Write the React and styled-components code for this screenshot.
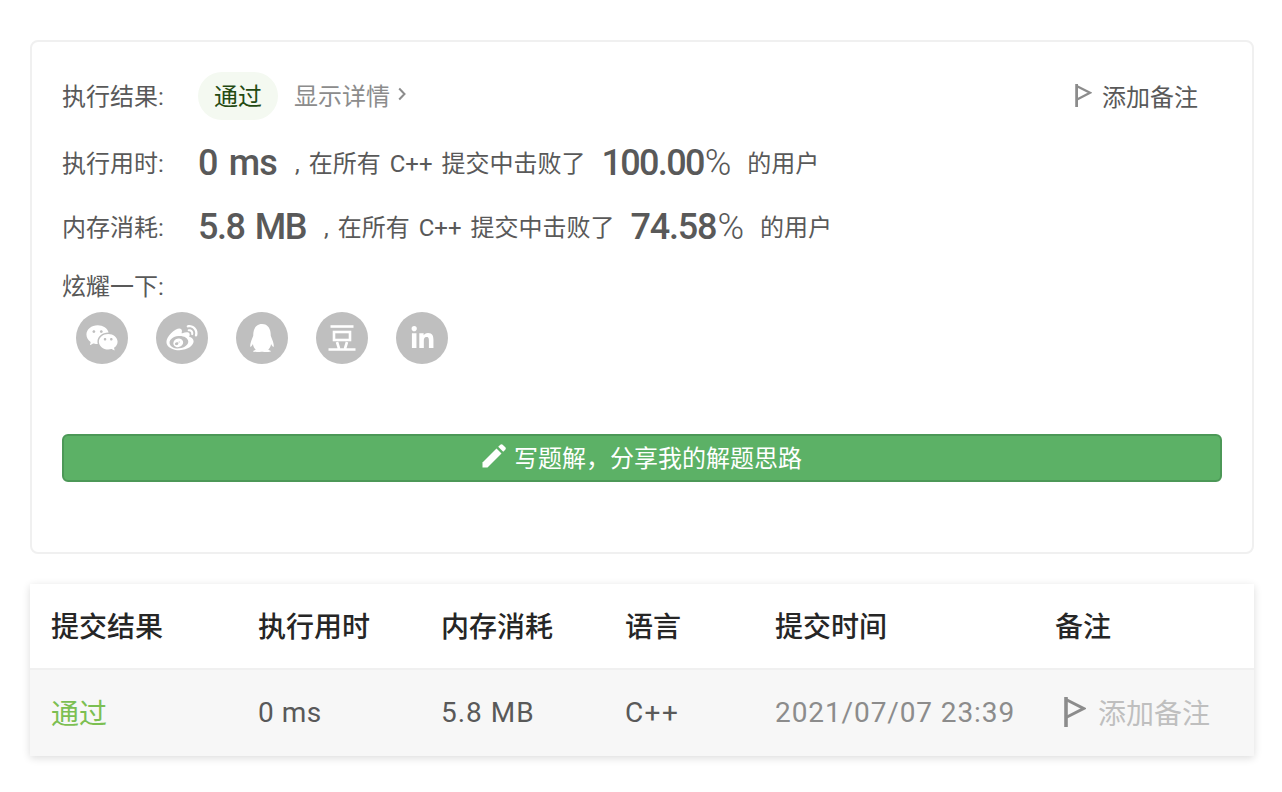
import React from "react";
import styled, { createGlobalStyle } from "styled-components";
import { RiWechatFill, RiWeiboFill } from "react-icons/ri";
import { FaLinkedinIn, FaQq } from "react-icons/fa";

const cjk = `Roboto, "Noto Sans CJK SC", sans-serif`;

const GlobalStyle = createGlobalStyle`
  html, body {
    margin: 0;
    padding: 0;
    background: #fff;
    font-family: ${cjk};
  }
`;

const Page = styled.div`
  width: 1282px;
  height: 792px;
  box-sizing: border-box;
  padding: 40px 28px 0 30px;
  overflow: hidden;
`;

const ResultCard = styled.section`
  box-sizing: border-box;
  height: 514px;
  border: 2px solid #f0f0f0;
  border-radius: 8px;
  padding: 30px 30px 0;
  display: flex;
  flex-direction: column;
`;

const Row = styled.div`
  display: flex;
  align-items: center;
  height: ${(p) => p.$h}px;
  margin-bottom: ${(p) => p.$mb || 0}px;
  color: #595959;
  font-size: 24px;
`;

// the CJK fallback sits a little low in the Roboto line box, so body text gets lifted
const Text = styled.span`
  padding-bottom: 4px;
`;

const Label = styled(Text)`
  width: 136px;
  flex: none;
  font-size: 24px;
  color: #595959;
`;

const Pill = styled.span`
  width: 80px;
  height: 48px;
  box-sizing: border-box;
  padding-bottom: 4px;
  border-radius: 24px;
  background: #f4f9f1;
  color: #244a12;
  font-size: 24px;
  display: flex;
  align-items: center;
  justify-content: center;
`;

const Details = styled.span`
  margin-left: 16px;
  color: #8c8c8c;
  display: flex;
  align-items: center;
  gap: 8px;
  padding-bottom: 4px;
`;

const NoteButton = styled.span`
  margin-left: auto;
  margin-right: 24px;
  display: flex;
  align-items: center;
  gap: 10px;
  color: #595959;
  padding-bottom: 2px;
`;

const Big = styled.span`
  font-size: 36px;
  font-weight: 500;
  color: #595959;
  letter-spacing: ${(p) => p.$ls}px;
  word-spacing: 3px;
`;

const Stat = styled.span`
  font-size: 36px;
  font-weight: 500;
  color: #595959;
  margin: 0 16px;
  letter-spacing: ${(p) => p.$ls}px;
`;

const Percent = styled.span`
  font-weight: 300;
  letter-spacing: 0;
  margin-left: 1px;
`;

const Comma = styled(Text)`
  margin-left: 18px;
  word-spacing: 3px;
`;

const ShareList = styled.div`
  display: flex;
  gap: 28px;
  padding-left: 14px;
  margin-top: 2px;
  margin-bottom: 70px;
`;

const ShareIcon = styled.span`
  width: 52px;
  height: 52px;
  border-radius: 50%;
  background: #bfbfbf;
  color: #fff;
  display: flex;
  align-items: center;
  justify-content: center;
`;

const WriteButton = styled.button`
  box-sizing: border-box;
  width: 1160px;
  height: 48px;
  background: #5cb166;
  border: 2px solid #4c9857;
  border-radius: 6px;
  color: #fff;
  font-family: ${cjk};
  font-size: 24px;
  display: flex;
  align-items: center;
  justify-content: center;
  gap: 8px;
  padding: 0 0 4px;
`;

const Table = styled.section`
  margin-top: 30px;
  height: 172px;
  box-shadow: 0 2px 8px rgba(0, 0, 0, 0.14);
  background: #fff;
`;

const TableRow = styled.div`
  display: grid;
  grid-template-columns: 207px 183px 184px 150px 280px 1fr;
  align-items: center;
  padding: 0 0 2px 21px;
  box-sizing: border-box;
  height: ${(p) => p.$h}px;
  background: ${(p) => p.$bg || "#fff"};
  border-bottom: ${(p) => (p.$line ? "2px solid #f0f0f0" : "none")};
  font-size: 28px;
`;

const HeadCell = styled.div`
  color: #262626;
  font-weight: 500;
`;

const Cell = styled.div`
  color: ${(p) => p.$color || "#595959"};
  white-space: nowrap;
  letter-spacing: ${(p) => p.$ls || 0}px;
`;

const NoteCell = styled.div`
  display: flex;
  align-items: center;
  gap: 12px;
  color: #bfbfbf;
  padding-left: 9px;
`;

const Flag = ({ w, h, color }) => (
  <svg width={w} height={h} viewBox="0 0 22 30" style={{ display: "block" }}>
    <path d="M2 0v30" stroke={color} strokeWidth="3.6" fill="none" />
    <path d="M2 2.5l17.5 9L2 20.5" stroke={color} strokeWidth="3" fill="none" />
  </svg>
);

const Chevron = () => (
  <svg width="8" height="14" viewBox="0 0 8 14">
    <path d="M1.2 1.5L6.5 7l-5.3 5.5" stroke="#8c8c8c" strokeWidth="2" fill="none" />
  </svg>
);

const Pencil = () => (
  <svg width="24" height="24" viewBox="0 0 24 24" fill="#fff">
    <path d="M0.5 18.5V23.5H5.5L19.5 9.5L14.5 4.5Z" />
    <path d="M16.2 2.8L18.3 0.7C19 0 20 0 20.7 0.7L23.3 3.3C24 4 24 5 23.3 5.7L21.2 7.8Z" />
  </svg>
);

const DoubanIcon = () => (
  <svg width="28" height="28" viewBox="0 0 28 28" fill="none" stroke="#fff" strokeWidth="2.6">
    <path d="M2.5 2.5h23" />
    <rect x="6" y="8" width="16" height="8" />
    <path d="M9 18l2 6.5M19 18l-2 6.5M0.5 25.5h27" />
  </svg>
);

const App = () => (
  <Page>
    <GlobalStyle />
    <ResultCard>
      <Row $h={48} $mb={19}>
        <Label>执行结果:</Label>
        <Pill>通过</Pill>
        <Details>
          显示详情
          <Chevron />
        </Details>
        <NoteButton>
          <Flag w={17} h={23} color="#8c8c8c" />
          添加备注
        </NoteButton>
      </Row>
      <Row $h={48} $mb={16}>
        <Label>执行用时:</Label>
        <Big $ls={-0.8}>0 ms</Big>
        <Comma>, 在所有 C++ 提交中击败了</Comma>
        <Stat $ls={-1.7}>100.00<Percent>%</Percent></Stat>
        <Text>的用户</Text>
      </Row>
      <Row $h={48} $mb={11}>
        <Label>内存消耗:</Label>
        <Big $ls={-1.5}>5.8 MB</Big>
        <Comma>, 在所有 C++ 提交中击败了</Comma>
        <Stat $ls={-1.2}>74.58<Percent>%</Percent></Stat>
        <Text>的用户</Text>
      </Row>
      <Row $h={48} $mb={0}>
        <Label>炫耀一下:</Label>
      </Row>
      <ShareList>
        <ShareIcon><RiWechatFill size={34} /></ShareIcon>
        <ShareIcon><RiWeiboFill size={34} /></ShareIcon>
        <ShareIcon><FaQq size={28} /></ShareIcon>
        <ShareIcon><DoubanIcon /></ShareIcon>
        <ShareIcon><FaLinkedinIn size={25} /></ShareIcon>
      </ShareList>
      <WriteButton>
        <Pencil />
        写题解，分享我的解题思路
      </WriteButton>
    </ResultCard>
    <Table>
      <TableRow $h={86} $line>
        <HeadCell>提交结果</HeadCell>
        <HeadCell>执行用时</HeadCell>
        <HeadCell>内存消耗</HeadCell>
        <HeadCell>语言</HeadCell>
        <HeadCell>提交时间</HeadCell>
        <HeadCell>备注</HeadCell>
      </TableRow>
      <TableRow $h={86} $bg="#f7f7f7">
        <Cell $color="#7cbf52">通过</Cell>
        <Cell $ls={0.5}>0 ms</Cell>
        <Cell $ls={1}>5.8 MB</Cell>
        <Cell $ls={1.4}>C++</Cell>
        <Cell $color="#8c8c8c" $ls={0.9}>2021/07/07 23:39</Cell>
        <NoteCell>
          <Flag w={22} h={30} color="#8c8c8c" />
          添加备注
        </NoteCell>
      </TableRow>
    </Table>
  </Page>
);

export default App;
